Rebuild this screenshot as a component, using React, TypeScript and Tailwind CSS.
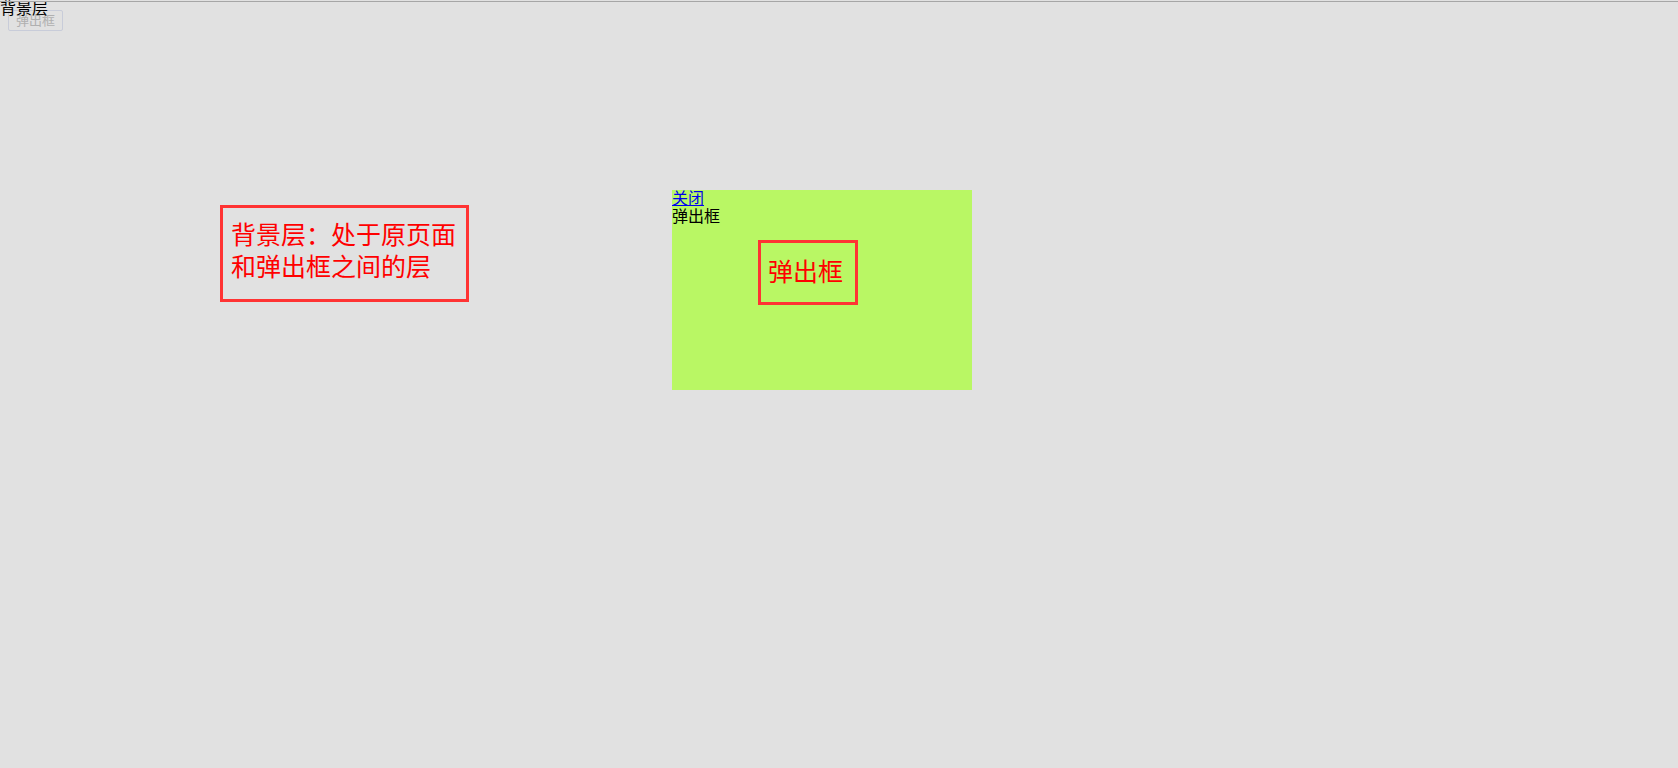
import React from 'react';

const App: React.FC = () => {
    return (
        <div
            className="relative w-full h-[768px] bg-white overflow-hidden text-[16px] leading-[18px] text-black"
            style={{ fontFamily: '"Liberation Sans", "Noto Sans CJK SC", sans-serif' }}
        >
            {/* Original page, underneath the mask */}
            <div className="pt-[10px] pl-[8px]">
                <button
                    type="button"
                    className="w-[55px] h-[21px] flex items-center justify-center rounded-[2px] border border-[#e3e8f6] bg-white text-[13px] leading-none text-[#c8c8c8]"
                >
                    弹出框
                </button>
            </div>

            {/* Background layer */}
            <div className="absolute inset-0 bg-black/[0.118]">
                <div className="absolute left-0 right-0 top-[1px] h-px bg-[#a6a6a6]" />
                <div>背景层</div>

                {/* Annotation for the background layer */}
                <div className="absolute left-[220px] top-[205px] w-[249px] h-[97px] border-[3px] border-[#ff3333] pl-[8px] pt-[11px] text-[25px] leading-[32px] text-[#ff0000]">
                    背景层：处于原页面
                    <br />
                    和弹出框之间的层
                </div>

                {/* Popup */}
                <div className="absolute left-[672px] top-[190px] w-[300px] h-[200px] bg-[#b9f764]">
                    <div>
                        <a href="#" className="text-[#0000ee] underline">
                            关闭
                        </a>
                    </div>
                    <div>弹出框</div>
                    <div className="mt-[14px] ml-[86px] w-[100px] h-[65px] flex items-center border-[3px] border-[#ff3333] pl-[7px] text-[25px] leading-none text-[#ff0000]">
                        弹出框
                    </div>
                </div>
            </div>
        </div>
    );
};

export default App;
